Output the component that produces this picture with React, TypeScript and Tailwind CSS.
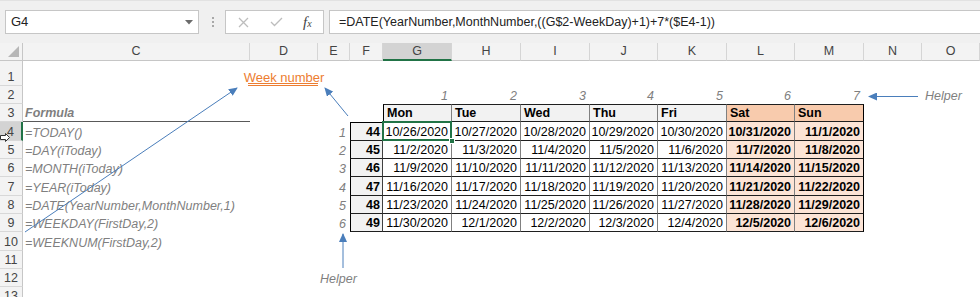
import React from "react";

const COLS = "grid-cols-[23px_227px_68px_32px_33px_69px_69px_69px_68px_69px_68px_69px_58px_58px]";
const ROWS = "grid-rows-[18px_25px_18px_18px_19px_18px_18px_19px_18px_18px_19px_18px_18px_18px]";
const LETTERS = ["", "C", "D", "E", "F", "G", "H", "I", "J", "K", "L", "M", "N", "O"];
const FORMULAS: Record<number, string> = {
  4: "=TODAY()",
  5: "=DAY(iToday)",
  6: "=MONTH(iToday)",
  7: "=YEAR(iToday)",
  8: "=DATE(YearNumber,MonthNumber,1)",
  9: "=WEEKDAY(FirstDay,2)",
  10: "=WEEKNUM(FirstDay,2)",
};
const DAYS = ["Mon", "Tue", "Wed", "Thu", "Fri", "Sat", "Sun"];

function dateStr(week: number, day: number) {
  const d = new Date(2020, 9, 26 + week * 7 + day);
  return `${d.getMonth() + 1}/${d.getDate()}/${d.getFullYear()}`;
}

const base = "flex items-end pb-px whitespace-nowrap min-w-0 text-[12.5px] leading-[14px]";
const gray = "text-[#7f7f7f] italic";

function SheetCell({ r, c }: { r: number; c: number }) {
  if (r === 1 && c === 2) {
    return (
      <div className={`${base} relative justify-center pb-[6px] text-[#ed7d31] text-[13px]`}>
        Week number
        <div className="absolute left-[-2px] right-0 bottom-0 h-[3px] border-t border-b border-[#ed7d31]" />
      </div>
    );
  }
  if (r === 2 && c >= 5 && c <= 11) {
    return <div className={`${base} justify-end pr-[4px] ${gray}`}>{c - 4}</div>;
  }
  if (r === 2 && c === 13) {
    return <div className={`${base} pl-[3px] ${gray}`}>Helper</div>;
  }
  if (r === 3 && c === 1) {
    return <div className={`${base} pl-[2px] font-bold ${gray} border-b border-[#595959]`}>Formula</div>;
  }
  if (r === 3 && c >= 5 && c <= 11) {
    const weekend = c >= 10;
    const left = c === 5 ? "border-l border-l-black" : "";
    const right = c === 11 ? "border-r-black" : "border-r-[#808080]";
    return (
      <div
        className={`${base} pl-[3px] font-bold text-black border-t border-b border-r border-t-[#1f1f1f] border-b-[#1f1f1f] ${right} ${left} ${
          weekend ? "bg-[#f8cbad]" : "bg-[#f2f2f2]"
        }`}
      >
        {DAYS[c - 5]}
      </div>
    );
  }
  if (r >= 4 && r <= 10 && c === 1) {
    return <div className={`${base} pl-[2px] ${gray}`}>{FORMULAS[r]}</div>;
  }
  if (r >= 4 && r <= 9) {
    if (c === 3) {
      return <div className={`${base} justify-end pr-[4px] ${gray}`}>{r - 3}</div>;
    }
    if (c === 4) {
      return (
        <div
          className={`${base} justify-end pr-[2px] font-bold text-black bg-[#f2f2f2] border-l border-l-black border-b border-b-[#1f1f1f] border-r border-r-[#404040] ${
            r === 4 ? "border-t border-t-black" : ""
          }`}
        >
          {40 + r}
        </div>
      );
    }
    if (c >= 5 && c <= 11) {
      const weekend = c >= 10;
      const right = c === 11 ? "border-r-black" : "border-r-[#808080]";
      const selected = r === 4 && c === 5;
      return (
        <div
          className={`${base} relative justify-end pr-[3px] text-black border-b border-b-[#1f1f1f] border-r ${right} ${
            weekend ? "bg-[#fce4d6] font-bold" : "bg-white"
          }`}
        >
          {dateStr(r - 4, c - 5)}
          {selected && (
            <>
              <div className="absolute -left-px -top-px -right-px -bottom-px border-2 border-[#217346] z-10" />
              <div className="absolute -right-[4px] -bottom-[4px] w-[6px] h-[6px] bg-[#217346] border border-white z-10" />
            </>
          )}
        </div>
      );
    }
  }
  if (r === 12 && c === 3) {
    return <div className={`${base} pl-[2px] ${gray}`}>Helper</div>;
  }
  return <div />;
}

function Grid() {
  const cells: React.ReactNode[] = [];
  for (let r = 0; r < 14; r++) {
    for (let c = 0; c < 14; c++) {
      const key = `${r}-${c}`;
      if (r === 0) {
        if (c === 0) {
          cells.push(
            <div key={key} className="relative bg-[#f3f3f3] border-r border-b border-[#c6c6c6]">
              <svg className="absolute right-[3px] bottom-[3px]" width="11" height="11" viewBox="0 0 11 11">
                <polygon points="11,0 11,11 0,11" fill="#b7b7b7" />
              </svg>
            </div>
          );
        } else {
          const sel = c === 5;
          cells.push(
            <div
              key={key}
              className={`flex items-center justify-center text-[12.5px] text-[#444] border-r border-[#d5d5d5] ${
                sel ? "bg-[#d3d3d3] border-b-2 border-b-[#217346]" : "bg-[#f3f3f3] border-b border-b-[#c6c6c6]"
              }`}
            >
              {LETTERS[c]}
            </div>
          );
        }
      } else if (c === 0) {
        const sel = r === 4;
        cells.push(
          <div
            key={key}
            className={`flex items-end justify-center pb-[1px] text-[12.5px] leading-[14px] text-[#444] border-b border-b-[#d8d8d8] ${
              sel ? "bg-[#d3d3d3] border-r-2 border-r-[#217346]" : "bg-[#f3f3f3] border-r border-r-[#c6c6c6]"
            }`}
          >
            {r}
          </div>
        );
      } else {
        cells.push(<SheetCell key={key} r={r} c={c} />);
      }
    }
  }
  return <div className={`grid ${COLS} ${ROWS}`}>{cells}</div>;
}

function Toolbar() {
  return (
    <div className="h-[43px] bg-[#f0f0f0] border-t border-[#e2e2e2] flex items-start pt-[9px]">
      <div className="ml-[5px] w-[194px] h-[24px] bg-white border border-[#c6c6c6] flex items-center justify-between pl-[5px] pr-[5px]">
        <span className="text-[13px] text-[#222] font-['Liberation_Sans',sans-serif]">G4</span>
        <svg width="8" height="5" viewBox="0 0 8 5">
          <polygon points="0,0 8,0 4,4.5" fill="#6b6b6b" />
        </svg>
      </div>
      <div className="ml-[12px] w-[4px] h-[24px] flex flex-col items-center justify-center gap-[2px]">
        <div className="w-[2px] h-[2px] bg-[#a8a8a8]" />
        <div className="w-[2px] h-[2px] bg-[#a8a8a8]" />
        <div className="w-[2px] h-[2px] bg-[#a8a8a8]" />
      </div>
      <div className="ml-[10px] w-[99px] h-[24px] bg-white border border-[#c6c6c6] flex items-center">
        <svg className="ml-[12px]" width="11" height="11" viewBox="0 0 11 11">
          <path d="M1 1 L10 10 M10 1 L1 10" stroke="#bdbdbd" strokeWidth="1.3" />
        </svg>
        <svg className="ml-[21px]" width="13" height="10" viewBox="0 0 13 10">
          <path d="M1 5 L4.5 8.5 L12 1" stroke="#bdbdbd" strokeWidth="1.3" fill="none" />
        </svg>
        <span className="ml-[20px] font-['Liberation_Serif',serif] italic text-[15px] text-[#444] leading-none">
          f<span className="text-[10px]">x</span>
        </span>
      </div>
      <div className="ml-[5px] flex-1 h-[24px] bg-white border border-r-0 border-[#c6c6c6] flex items-center pl-[9px]">
        <span className="text-[12.5px] text-[#222] font-['Liberation_Sans',sans-serif] whitespace-nowrap">
          =DATE(YearNumber,MonthNumber,((G$2-WeekDay)+1)+7*($E4-1))
        </span>
      </div>
    </div>
  );
}

function Arrows() {
  const col = "#4a7ebb";
  return (
    <svg className="absolute left-0 top-0 pointer-events-none z-20" width="980" height="297" viewBox="0 0 980 297">
      <defs>
        <marker id="ah" markerWidth="9" markerHeight="8" refX="8" refY="4" orient="auto" markerUnits="userSpaceOnUse">
          <path d="M0,0 L9,4 L0,8 z" fill={col} />
        </marker>
      </defs>
      <line x1="25" y1="232" x2="237" y2="88" stroke={col} strokeWidth="1" markerEnd="url(#ah)" />
      <line x1="348" y1="116" x2="325" y2="88" stroke={col} strokeWidth="1" markerEnd="url(#ah)" />
      <line x1="343" y1="268" x2="343" y2="234" stroke={col} strokeWidth="1" markerEnd="url(#ah)" />
      <line x1="918" y1="96.5" x2="869" y2="96.5" stroke={col} strokeWidth="1" markerEnd="url(#ah)" />
      <g transform="translate(0,133)">
        <path d="M0.5 2.5 L5.5 2.5 L5.5 0.5 L9.5 4.5 L5.5 8.5 L5.5 6.5 L0.5 6.5 Z" fill="#fff" stroke="#333" strokeWidth="1" />
      </g>
    </svg>
  );
}

export default function App() {
  return (
    <div className="relative w-[980px] h-[297px] overflow-hidden bg-white font-['Liberation_Sans',Arial,sans-serif]">
      <Toolbar />
      <Grid />
      <Arrows />
    </div>
  );
}
